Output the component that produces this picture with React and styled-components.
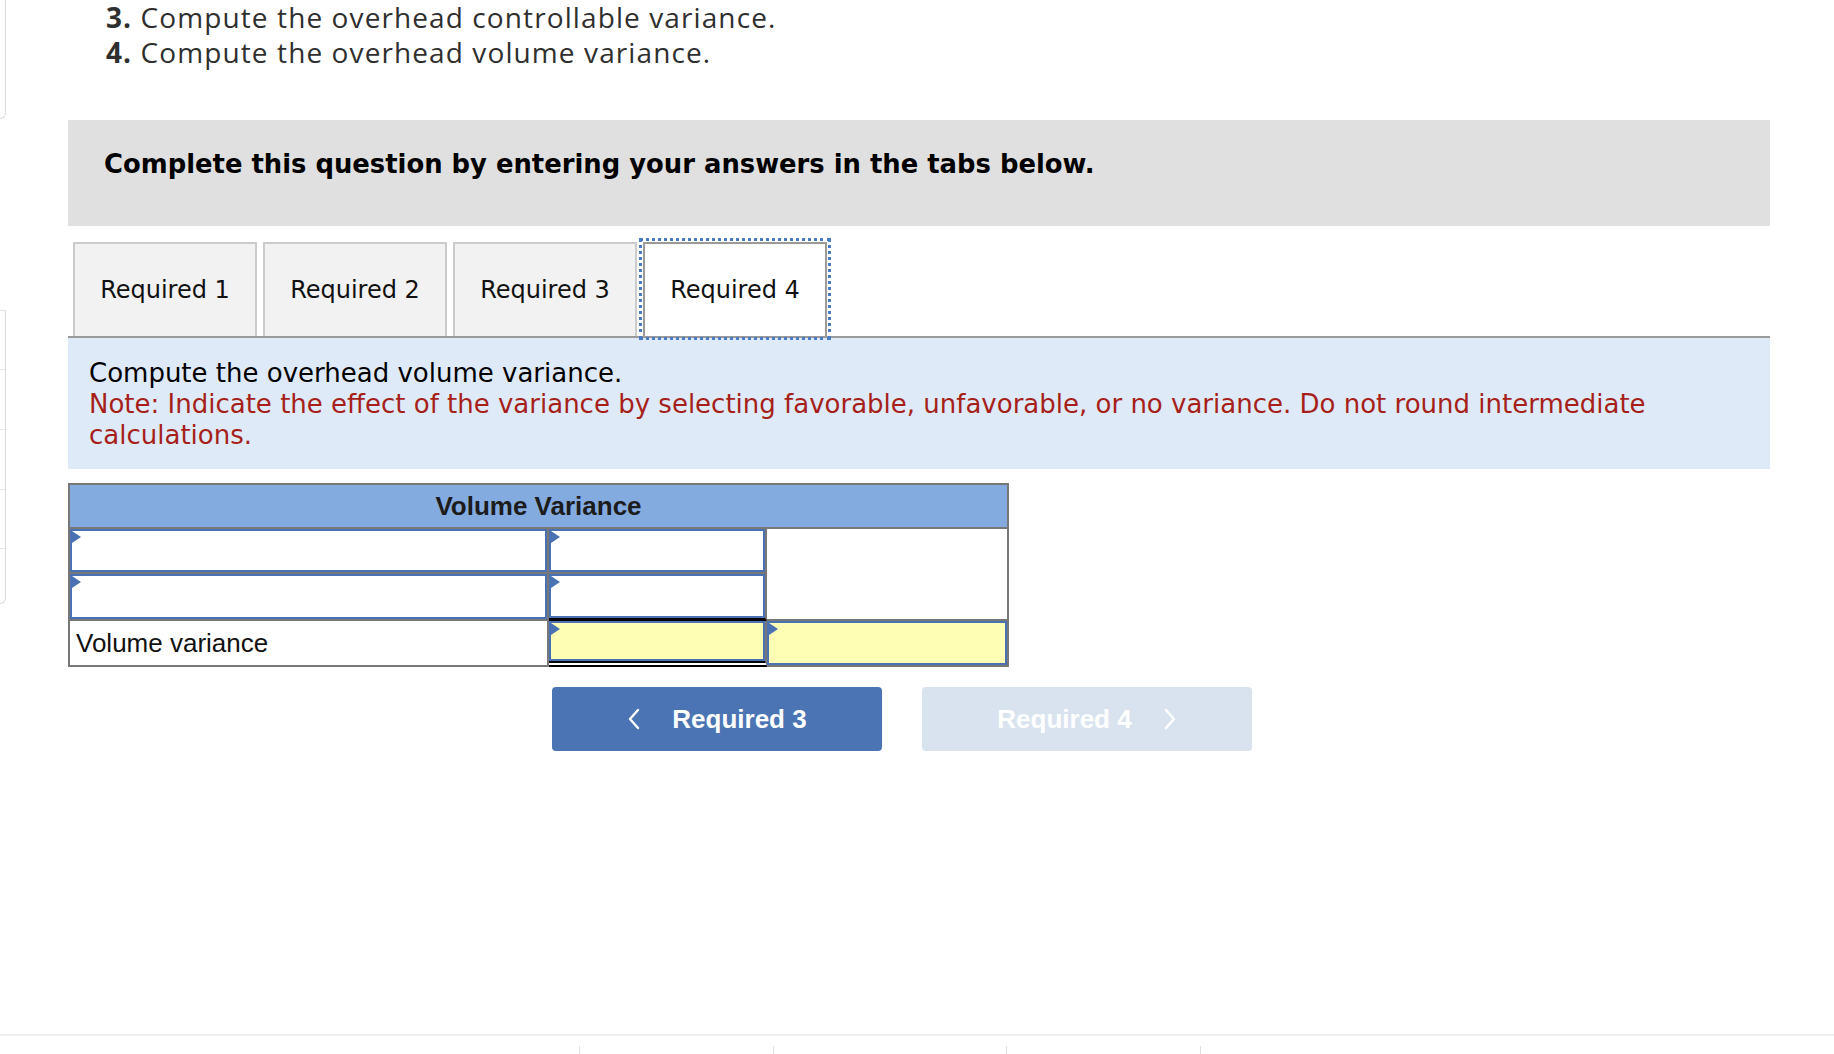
import React from 'react';
import styled, { createGlobalStyle } from 'styled-components';

const GlobalStyle = createGlobalStyle`
  html, body {
    margin: 0;
    padding: 0;
    background: #fff;
  }
  body {
    width: 1834px;
    height: 1054px;
    overflow: hidden;
  }
`;

const Page = styled.div`
  display: flex;
  flex-direction: column;
  height: 1054px;
`;

const Body = styled.div`
  display: flex;
  flex: 1;
`;

const Sidebar = styled.div`
  width: 6px;
  flex-shrink: 0;
  display: flex;
  flex-direction: column;
`;

const TopStub = styled.div`
  height: 118px;
  border-right: 1px solid #dcdcdc;
  border-bottom: 1px solid #dcdcdc;
  border-bottom-right-radius: 8px;
`;

const ListStub = styled.div`
  margin-top: 191px;
  border-top: 1px solid #e2e2e2;
  border-right: 1px solid #dcdcdc;
  border-bottom: 1px solid #dcdcdc;
  border-bottom-right-radius: 8px;
`;

const StubItem = styled.div`
  height: ${p => p.$h}px;
  border-bottom: ${p => (p.$last ? 'none' : '1px solid #e6e6e6')};
`;

const Main = styled.div`
  width: 1702px;
  padding-left: 62px;
`;

const Questions = styled.div`
  padding-left: 38px;
  font-family: "Open Sans", "Liberation Sans", sans-serif;
  font-size: 28px;
  line-height: 35px;
  letter-spacing: 1.1px;
  color: #2f2f2f;
`;

const QLine = styled.div`
  b {
    font-weight: 700;
  }
`;

const Instruction = styled.div`
  box-sizing: border-box;
  margin-top: 50px;
  height: 106px;
  padding: 29px 36px 0;
  background: #e0e0e0;
  font-family: "DejaVu Sans", Verdana, sans-serif;
  font-weight: 700;
  font-size: 25.85px;
  color: #000;
`;

const TabBar = styled.div`
  display: flex;
  gap: 6px;
  margin-top: 16px;
  padding-left: 5px;
  border-bottom: 2px solid #9a9a9a;
`;

const Tab = styled.div`
  box-sizing: border-box;
  width: 184px;
  height: 94px;
  display: flex;
  align-items: center;
  justify-content: center;
  font-family: "DejaVu Sans", Verdana, sans-serif;
  font-size: 24px;
  color: #111;
  background: ${p => (p.$active ? '#fff' : '#f2f2f2')};
  border: 2px solid ${p => (p.$active ? '#9b9b9b' : '#cbcbcb')};
  border-bottom: none;
  ${p => p.$active && `
    outline: 3px dotted #4a7cc4;
    outline-offset: 1px;
  `}
`;

const InfoPanel = styled.div`
  padding: 20px 21px 18px;
  background: #deeaf7;
  font-family: "DejaVu Sans", Verdana, sans-serif;
  font-size: 26px;
  line-height: 31px;
  color: #000;
`;

const Note = styled.div`
  color: #a61f1a;
`;

const Grid = styled.div`
  display: grid;
  grid-template-columns: 479px 218px 240px;
  grid-template-rows: 44px 45px 47px 46px;
  width: 941px;
  box-sizing: border-box;
  margin-top: 14px;
  border: 2px solid #787878;
  border-bottom: none;
  font-family: "Liberation Sans", Arial, sans-serif;
`;

const HeaderCell = styled.div`
  grid-column: 1 / -1;
  display: flex;
  align-items: center;
  justify-content: center;
  background: #84abe0;
  border-bottom: 2px solid #787878;
  font-weight: 700;
  font-size: 26px;
  color: #1c1c1c;
`;

const Cell = styled.div`
  position: relative;
  box-sizing: border-box;
  display: flex;
  align-items: center;
  border-right: ${p => (p.$lastCol ? 'none' : '2px solid #787878')};
  border-bottom: ${p => p.$bottom || '2px solid #787878'};
  ${p => p.$span && `grid-row: span ${p.$span};`}
  font-size: 26px;
  color: #111;
  padding-left: ${p => (p.$text ? '6px' : '0')};
  ${p => p.$input && `
    &::before {
      content: '';
      position: absolute;
      z-index: 1;
      left: 2px;
      top: 2px;
      border-top: 6.5px solid transparent;
      border-bottom: 6.5px solid transparent;
      border-left: 9px solid #4a72b2;
    }
  `}
`;

const Field = styled.div`
  box-sizing: border-box;
  width: 100%;
  height: 100%;
  border: 2px solid #4a72b2;
  background: ${p => (p.$total ? '#fefeb4' : '#fff')};
`;

const ButtonRow = styled.div`
  display: flex;
  gap: 40px;
  margin-top: 20px;
  padding-left: 484px;
`;

const NavButton = styled.div`
  box-sizing: border-box;
  width: 330px;
  height: 64px;
  display: flex;
  align-items: center;
  justify-content: center;
  gap: 31px;
  border-radius: 4px;
  background: ${p => (p.$disabled ? '#d9e3ef' : '#4a74b4')};
  font-family: "Liberation Sans", Arial, sans-serif;
  font-weight: 700;
  font-size: 26px;
  color: #fff;
`;

const Footer = styled.div`
  display: flex;
  height: 18px;
  padding-left: 579px;
  border-top: 2px solid #efefef;
`;

const FooterCell = styled.div`
  width: ${p => p.$w}px;
  height: 8px;
  margin-top: 10px;
  border-left: 1px solid #e0e0e0;
`;

const Chevron = ({ dir }) => (
  <svg width="14" height="24" viewBox="0 0 14 24" fill="none">
    <polyline
      points={dir === 'left' ? '11,3 3,12 11,21' : '3,3 11,12 3,21'}
      stroke="#fff"
      strokeWidth="2.4"
      strokeLinecap="round"
      strokeLinejoin="round"
    />
  </svg>
);

const tabs = ['Required 1', 'Required 2', 'Required 3', 'Required 4'];

const App = () => (
  <Page>
    <GlobalStyle />
    <Body>
      <Sidebar>
        <TopStub />
        <ListStub>
          <StubItem $h={58} />
          <StubItem $h={59} />
          <StubItem $h={59} />
          <StubItem $h={58} />
          <StubItem $h={54} $last />
        </ListStub>
      </Sidebar>
      <Main>
        <Questions>
          <QLine><b>3.</b> Compute the overhead controllable variance.</QLine>
          <QLine><b>4.</b> Compute the overhead volume variance.</QLine>
        </Questions>

        <Instruction>Complete this question by entering your answers in the tabs below.</Instruction>

        <TabBar>
          {tabs.map((t, i) => (
            <Tab key={t} $active={i === 3}>{t}</Tab>
          ))}
        </TabBar>

        <InfoPanel>
          Compute the overhead volume variance.
          <Note>
            Note: Indicate the effect of the variance by selecting favorable, unfavorable, or no variance. Do not round intermediate calculations.
          </Note>
        </InfoPanel>

        <Grid>
          <HeaderCell>Volume Variance</HeaderCell>

          <Cell $input><Field /></Cell>
          <Cell $input><Field /></Cell>
          <Cell $lastCol $span={2} />

          <Cell $input><Field /></Cell>
          <Cell $input $bottom="3px solid #000"><Field /></Cell>

          <Cell $text>Volume variance</Cell>
          <Cell $input $bottom="6px double #000"><Field $total /></Cell>
          <Cell $input $lastCol><Field $total /></Cell>
        </Grid>

        <ButtonRow>
          <NavButton>
            <Chevron dir="left" />
            Required 3
          </NavButton>
          <NavButton $disabled>
            Required 4
            <Chevron dir="right" />
          </NavButton>
        </ButtonRow>
      </Main>
    </Body>
    <Footer>
      <FooterCell $w={193} />
      <FooterCell $w={232} />
      <FooterCell $w={193} />
      <FooterCell $w={100} />
    </Footer>
  </Page>
);

export default App;
